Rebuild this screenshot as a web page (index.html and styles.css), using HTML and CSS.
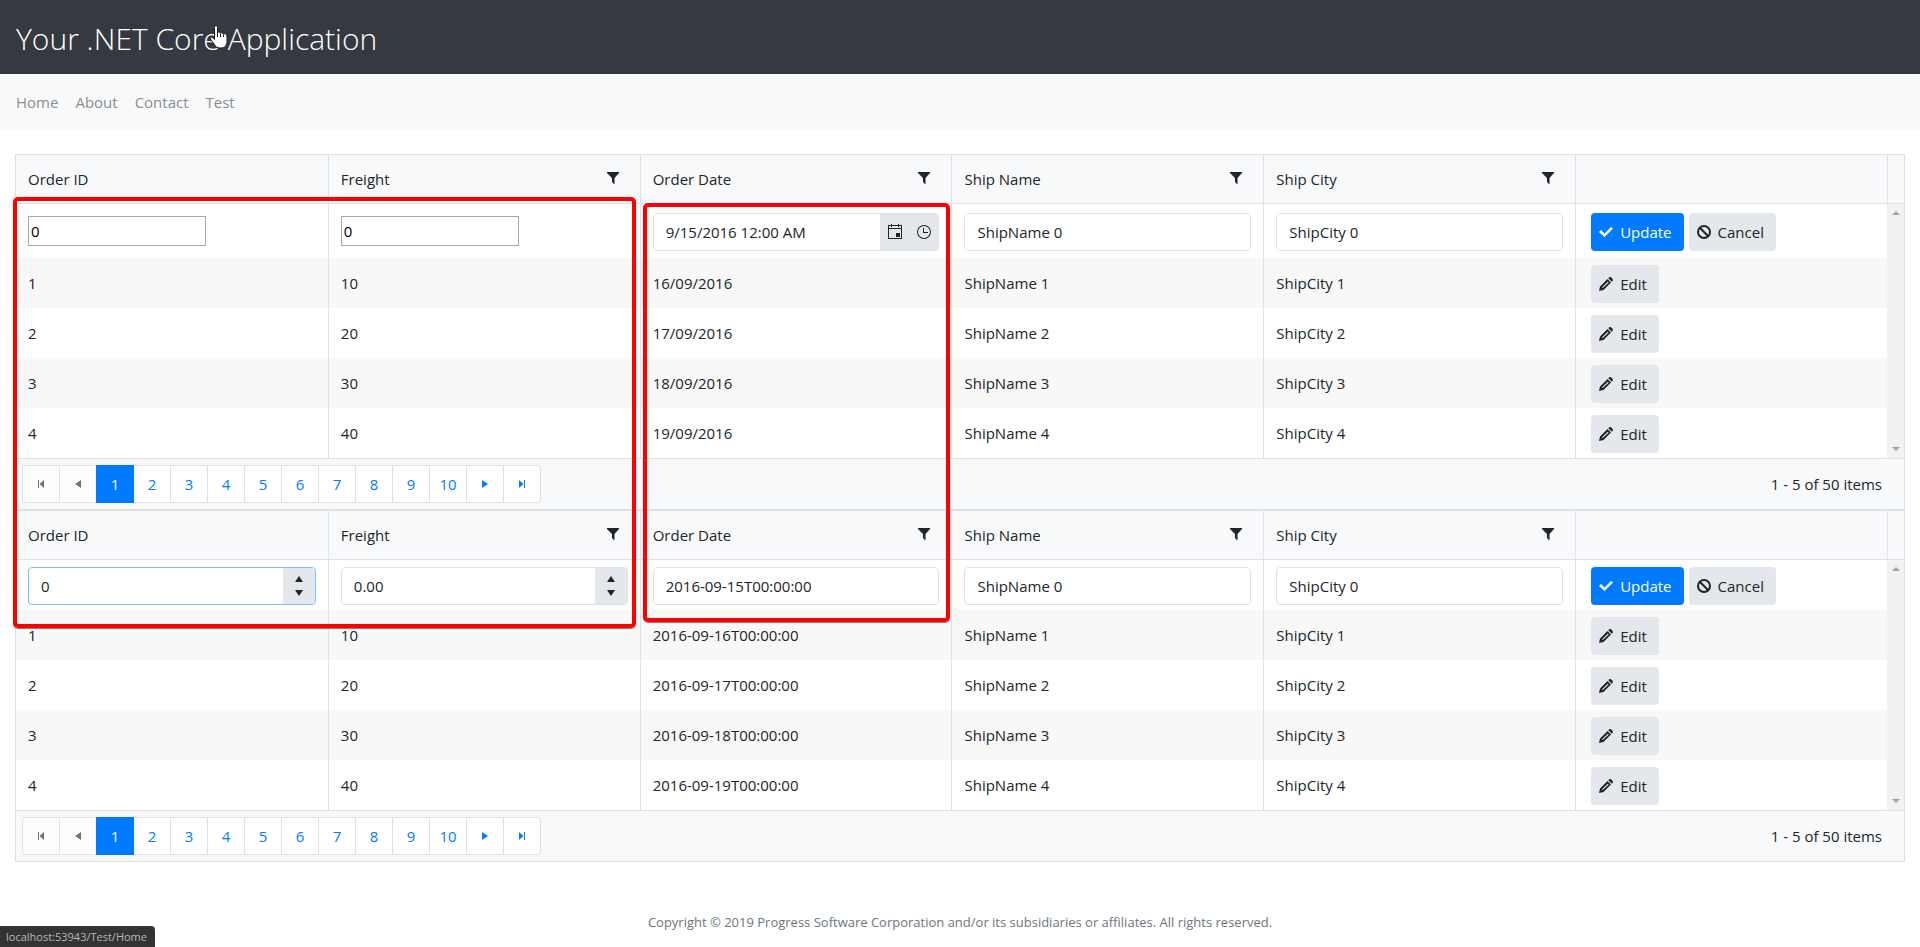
FILE: index.html
```html
<!DOCTYPE html>
<html lang="en">
<head>
<meta charset="utf-8">
<title>Your .NET Core Application</title>
<link rel="stylesheet" href="styles.css">
</head>
<body>
<svg class="sprite" aria-hidden="true">
  <symbol id="filter" viewBox="0 0 16 16"><path d="M2 2h12v1L9.500 8v6h-.6L7 12V8L2 3z"/></symbol>
  <symbol id="calendar" viewBox="0 0 16 16"><path d="M4 0h1v1h6V0h1v1h3v14H1V1h3zM2 2v2h12V2h-2v1h-1V2H5v1H4V2zM2 5v9h12V5zM9 9h4v4H9z" fill-rule="evenodd"/></symbol>
  <symbol id="clock" viewBox="0 0 16 16"><path d="M8 1a7 7 0 1 1 0 14A7 7 0 0 1 8 1zm0 1a6 6 0 1 0 0 12A6 6 0 0 0 8 2zM7 4h1v4h4v1H7z" fill-rule="evenodd"/></symbol>
  <symbol id="check" viewBox="0 0 16 16"><path d="M1 8l2-2 3.500 3.500L13 3l2 1.500L6.500 13z"/></symbol>
  <symbol id="cancel" viewBox="0 0 16 16"><circle cx="8" cy="8" r="6" fill="none" stroke="currentColor" stroke-width="2"/><path d="M3.800 3.800l8.400 8.400" fill="none" stroke="currentColor" stroke-width="2"/></symbol>
  <symbol id="pencil" viewBox="0 0 16 16"><path d="M1 15l1-4.500 7.500-7.500 3.500 3.500L5.500 14zM10.300 2.200l1.200-1.100c1.200-.7 4.100 2.200 3.400 3.400l-1.100 1.200zM4 11.300l.7.700 6-5.400-.9-.9z" fill-rule="evenodd"/></symbol>
  <symbol id="first" viewBox="0 0 16 16"><path d="M5 4h1v8H5zM11 4v8L6.500 8z"/></symbol>
  <symbol id="prev" viewBox="0 0 16 16"><path d="M11 4v8L5 8z"/></symbol>
  <symbol id="next" viewBox="0 0 16 16"><path d="M5 4v8l6-4z"/></symbol>
  <symbol id="last" viewBox="0 0 16 16"><path d="M10 4h1v8h-1zM5 4v8l4.500-4z"/></symbol>
  <symbol id="up" viewBox="0 0 8 6" preserveAspectRatio="none"><path d="M4 0l4 6H0z"/></symbol>
  <symbol id="down" viewBox="0 0 8 6" preserveAspectRatio="none"><path d="M4 6l4-6H0z"/></symbol>
</svg>

<header class="banner"><h1 class="title">Your .NET Core Application</h1></header>
<nav class="nav">
  <a href="#">Home</a><a href="#">About</a><a href="#">Contact</a><a href="#">Test</a>
</nav>

<main class="content">
  <section class="grid">
    <table class="table">
      <colgroup><col><col><col><col><col><col><col class="col-scroll"></colgroup>
      <thead>
        <tr>
          <th>Order ID</th>
          <th><div class="head">Freight <button class="filter" aria-label="Filter Freight"><svg class="icon"><use href="#filter"/></svg></button></div></th>
          <th><div class="head">Order Date <button class="filter" aria-label="Filter Order Date"><svg class="icon"><use href="#filter"/></svg></button></div></th>
          <th><div class="head">Ship Name <button class="filter" aria-label="Filter Ship Name"><svg class="icon"><use href="#filter"/></svg></button></div></th>
          <th><div class="head">Ship City <button class="filter" aria-label="Filter Ship City"><svg class="icon"><use href="#filter"/></svg></button></div></th>
          <th></th>
          <th></th>
        </tr>
      </thead>
      <tbody>
        <tr class="edit-row tall">
          <td><input class="plain" type="text" value="0" aria-label="Order ID"></td>
          <td><input class="plain" type="text" value="0" aria-label="Freight"></td>
          <td><div class="picker"><input type="text" value="9/15/2016 12:00 AM" aria-label="Order Date"><span class="picker-buttons"><button aria-label="Open calendar"><svg class="icon"><use href="#calendar"/></svg></button><button aria-label="Open time list"><svg class="icon"><use href="#clock"/></svg></button></span></div></td>
          <td><input class="textbox" type="text" value="ShipName 0" aria-label="Ship Name"></td>
          <td><input class="textbox" type="text" value="ShipCity 0" aria-label="Ship City"></td>
          <td><div class="commands"><button class="btn primary"><svg class="icon"><use href="#check"/></svg>Update</button><button class="btn"><svg class="icon"><use href="#cancel"/></svg>Cancel</button></div></td>
          <td class="scroll" rowspan="5"><div class="scrollbar"><svg class="arrow"><use href="#up"/></svg><svg class="arrow"><use href="#down"/></svg></div></td>
        </tr>
        <tr class="alt"><td>1</td><td>10</td><td>16/09/2016</td><td>ShipName 1</td><td>ShipCity 1</td><td><div class="commands"><button class="btn"><svg class="icon"><use href="#pencil"/></svg>Edit</button></div></td></tr>
        <tr><td>2</td><td>20</td><td>17/09/2016</td><td>ShipName 2</td><td>ShipCity 2</td><td><div class="commands"><button class="btn"><svg class="icon"><use href="#pencil"/></svg>Edit</button></div></td></tr>
        <tr class="alt"><td>3</td><td>30</td><td>18/09/2016</td><td>ShipName 3</td><td>ShipCity 3</td><td><div class="commands"><button class="btn"><svg class="icon"><use href="#pencil"/></svg>Edit</button></div></td></tr>
        <tr><td>4</td><td>40</td><td>19/09/2016</td><td>ShipName 4</td><td>ShipCity 4</td><td><div class="commands"><button class="btn"><svg class="icon"><use href="#pencil"/></svg>Edit</button></div></td></tr>
      </tbody>
    </table>
    <div class="pager">
      <div class="pages">
        <button disabled aria-label="First page"><svg class="icon"><use href="#first"/></svg></button><button disabled aria-label="Previous page"><svg class="icon"><use href="#prev"/></svg></button><button class="current">1</button><button>2</button><button>3</button><button>4</button><button>5</button><button>6</button><button>7</button><button>8</button><button>9</button><button>10</button><button aria-label="Next page"><svg class="icon"><use href="#next"/></svg></button><button aria-label="Last page"><svg class="icon"><use href="#last"/></svg></button>
      </div>
      <span>1 - 5 of 50 items</span>
    </div>
  </section>

  <section class="grid">
    <table class="table">
      <colgroup><col><col><col><col><col><col><col class="col-scroll"></colgroup>
      <thead>
        <tr>
          <th>Order ID</th>
          <th><div class="head">Freight <button class="filter" aria-label="Filter Freight"><svg class="icon"><use href="#filter"/></svg></button></div></th>
          <th><div class="head">Order Date <button class="filter" aria-label="Filter Order Date"><svg class="icon"><use href="#filter"/></svg></button></div></th>
          <th><div class="head">Ship Name <button class="filter" aria-label="Filter Ship Name"><svg class="icon"><use href="#filter"/></svg></button></div></th>
          <th><div class="head">Ship City <button class="filter" aria-label="Filter Ship City"><svg class="icon"><use href="#filter"/></svg></button></div></th>
          <th></th>
          <th></th>
        </tr>
      </thead>
      <tbody>
        <tr class="edit-row">
          <td><div class="picker focused"><input type="text" value="0" aria-label="Order ID"><span class="spinner"><button aria-label="Increase Order ID"><svg class="arrow"><use href="#up"/></svg></button><button aria-label="Decrease Order ID"><svg class="arrow"><use href="#down"/></svg></button></span></div></td>
          <td><div class="picker"><input type="text" value="0.00" aria-label="Freight"><span class="spinner"><button aria-label="Increase Freight"><svg class="arrow"><use href="#up"/></svg></button><button aria-label="Decrease Freight"><svg class="arrow"><use href="#down"/></svg></button></span></div></td>
          <td><input class="textbox" type="text" value="2016-09-15T00:00:00" aria-label="Order Date"></td>
          <td><input class="textbox" type="text" value="ShipName 0" aria-label="Ship Name"></td>
          <td><input class="textbox" type="text" value="ShipCity 0" aria-label="Ship City"></td>
          <td><div class="commands"><button class="btn primary"><svg class="icon"><use href="#check"/></svg>Update</button><button class="btn"><svg class="icon"><use href="#cancel"/></svg>Cancel</button></div></td>
          <td class="scroll" rowspan="5"><div class="scrollbar"><svg class="arrow"><use href="#up"/></svg><svg class="arrow"><use href="#down"/></svg></div></td>
        </tr>
        <tr class="alt"><td>1</td><td>10</td><td>2016-09-16T00:00:00</td><td>ShipName 1</td><td>ShipCity 1</td><td><div class="commands"><button class="btn"><svg class="icon"><use href="#pencil"/></svg>Edit</button></div></td></tr>
        <tr><td>2</td><td>20</td><td>2016-09-17T00:00:00</td><td>ShipName 2</td><td>ShipCity 2</td><td><div class="commands"><button class="btn"><svg class="icon"><use href="#pencil"/></svg>Edit</button></div></td></tr>
        <tr class="alt"><td>3</td><td>30</td><td>2016-09-18T00:00:00</td><td>ShipName 3</td><td>ShipCity 3</td><td><div class="commands"><button class="btn"><svg class="icon"><use href="#pencil"/></svg>Edit</button></div></td></tr>
        <tr><td>4</td><td>40</td><td>2016-09-19T00:00:00</td><td>ShipName 4</td><td>ShipCity 4</td><td><div class="commands"><button class="btn"><svg class="icon"><use href="#pencil"/></svg>Edit</button></div></td></tr>
      </tbody>
    </table>
    <div class="pager">
      <div class="pages">
        <button disabled aria-label="First page"><svg class="icon"><use href="#first"/></svg></button><button disabled aria-label="Previous page"><svg class="icon"><use href="#prev"/></svg></button><button class="current">1</button><button>2</button><button>3</button><button>4</button><button>5</button><button>6</button><button>7</button><button>8</button><button>9</button><button>10</button><button aria-label="Next page"><svg class="icon"><use href="#next"/></svg></button><button aria-label="Last page"><svg class="icon"><use href="#last"/></svg></button>
      </div>
      <span>1 - 5 of 50 items</span>
    </div>
  </section>
</main>

<footer class="footer">Copyright © 2019 Progress Software Corporation and/or its subsidiaries or affiliates. All rights reserved.</footer>

<div class="mark mark-ids"></div>
<div class="mark mark-dates"></div>
<div class="status">localhost:53943/Test/Home</div>
<svg class="cursor" viewBox="0 0 18 24" aria-hidden="true"><path d="M4.500 2.500C4.500.2 7.500.2 7.500 2.500V7.500c.8-.8 2.600-.5 2.900.6.900-.6 2.500-.3 2.800.9 1.600-.6 3.800 0 3.800 2V16c0 4.500-2 7-6.500 7-3.500 0-5-1.500-6.500-4L.9 14.500c-1-1.800 1-3 2.400-1.500l1.200 1.500z" fill="#fff" stroke="#1b1d2b"/><path d="M7.500 7.500v4.500M10.500 8.500V12M13.500 9.500V12" stroke="#1b1d2b" fill="none"/></svg>
</body>
</html>
```

FILE: styles.css
```css
* { box-sizing: border-box; }

body {
  margin: 0;
  position: relative;
  min-height: 100vh;
  background: #fff;
  color: #212529;
  font-family: "Open Sans", "Noto Sans", sans-serif;
  font-size: 15px;
  line-height: 24px;
}

input, button { font: inherit; color: inherit; margin: 0; }
button { border: 0; padding: 0; background: none; }

.sprite { position: absolute; width: 0; height: 0; }
.icon { display: block; flex: none; width: 16px; height: 16px; fill: currentColor; }
.arrow { display: block; width: 8px; height: 6px; fill: currentColor; }

.banner { padding: 18px 16px 14px; background: #343a40; color: #fff; }
.title { margin: 0; font-size: 30px; line-height: 42px; font-weight: 300; }

.nav { display: flex; gap: 17px; padding: 16px; background: #f8f9fb; }
.nav a { color: #8b8e91; text-decoration: none; }

.content { padding: 24px 15px 0; }

.grid { border: 1px solid #dee2e6; background: #f8f9fb; }

.table { width: 100%; table-layout: fixed; border-collapse: separate; border-spacing: 0; }
.col-scroll { width: 17px; }
th, td { padding: 0 12px; border-left: 1px solid #dee2e6; text-align: left; vertical-align: middle; }
th:first-child, td:first-child { border-left: 0; }
th { height: 49px; border-bottom: 1px solid #dee2e6; font-weight: 400; }
th:last-child { padding: 0; }
.head { display: flex; align-items: center; justify-content: space-between; }
.filter { padding: 0 7px 2px; }

tbody tr { background: #fff; }
tbody tr.alt { background: #f8f8f8; }
td { height: 50px; }
.tall td { height: 54px; }
.edit-row td { padding-top: 2px; }
td.scroll, .edit-row td.scroll { padding: 0; border-left: 0; height: 1px; background: #f1f1f1; }
.scrollbar { display: flex; flex-direction: column; justify-content: space-between; align-items: center; height: 100%; padding: 7px 0; color: #a3a3a3; }
.scrollbar .arrow { height: 4px; }

.plain { display: block; width: 178px; height: 30px; padding: 1px 2px; border: 1px solid #a9a9a9; background: #fff; color: #000; }
.edit-row .plain { margin-bottom: 2px; }
.textbox, .picker { width: 100%; height: 38px; border: 1px solid #dee2e6; border-radius: 4px; background: #fff; }
.textbox { display: block; padding: 0 12px; }
.picker { display: flex; overflow: hidden; }
.picker input { flex: 1; min-width: 0; border: 0; padding: 0 12px; background: none; outline: 0; }
.focused { border-color: #7fbdff; }
.picker-buttons { display: flex; align-items: center; gap: 13px; padding: 0 6px 0 7px; background: #e4e7eb; }
.spinner { display: flex; flex-direction: column; align-items: center; justify-content: center; gap: 8px; width: 32px; background: #e4e7eb; }

.commands { display: flex; gap: 5px; padding: 0 3px; }
tr:not(.edit-row) .commands { padding-top: 2px; }
.btn { display: flex; align-items: center; gap: 6px; height: 38px; padding: 0 12px 0 7px; border-radius: 4px; background: #e4e7eb; }
.primary { background: #007bff; color: #fff; }

.pager { display: flex; align-items: center; justify-content: space-between; height: 51px; padding: 0 22px 0 6px; border-top: 1px solid #dee2e6; }
.pages { display: flex; padding-left: 1px; }
.pages button { display: flex; align-items: center; justify-content: center; width: 38px; height: 38px; margin-left: -1px; border: 1px solid #dee2e6; background: #fff; color: #007bff; }
.pages button:first-child { border-radius: 4px 0 0 4px; }
.pages button:last-child { border-radius: 0 4px 4px 0; }
.pages button:disabled { background: #fdfdfe; color: #6f7376; }
.pages .current { z-index: 1; border-color: #007bff; background: #007bff; color: #fff; }

.footer { padding: 48px 16px 0; text-align: center; font-size: 13px; color: #6c757d; }

.mark { position: absolute; border: 4px solid #f00; border-radius: 5px; box-shadow: 0 1px 1px #777; pointer-events: none; }
.mark-ids { left: 13px; top: 197px; width: 623px; height: 431px; }
.mark-dates { left: 643px; top: 203px; width: 307px; height: 419px; }

.status { position: fixed; left: 0; bottom: 0; padding: 0 8px 0 6px; border-radius: 0 4px 0 0; background: #333; color: #b8b8b8; font-size: 11px; line-height: 21px; }
.cursor { position: absolute; left: 210px; top: 25px; width: 18px; height: 24px; }
```
